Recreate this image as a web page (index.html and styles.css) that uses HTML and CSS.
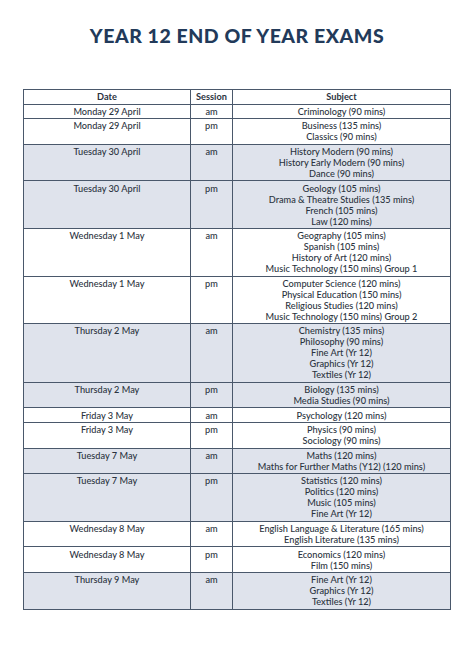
FILE: index.html
```html
<!DOCTYPE html>
<html lang="en">
<head>
<meta charset="utf-8">
<title>Year 12 End of Year Exams</title>
<link rel="stylesheet" href="styles.css">
</head>
<body>
<div class="page">
  <h1 class="title">YEAR 12 END OF YEAR EXAMS</h1>
  <table class="exams">
    <colgroup>
      <col class="c-date">
      <col class="c-session">
      <col class="c-subject">
    </colgroup>
    <thead>
      <tr><th>Date</th><th>Session</th><th>Subject</th></tr>
    </thead>
    <tbody>
      <tr><td>Monday 29 April</td><td>am</td><td>Criminology (90 mins)</td></tr>
      <tr><td>Monday 29 April</td><td>pm</td><td>Business (135 mins)<br>Classics (90 mins)</td></tr>
      <tr class="shade"><td>Tuesday 30 April</td><td>am</td><td>History Modern (90 mins)<br>History Early Modern (90 mins)<br>Dance (90 mins)</td></tr>
      <tr class="shade"><td>Tuesday 30 April</td><td>pm</td><td>Geology (105 mins)<br>Drama &amp; Theatre Studies (135 mins)<br>French (105 mins)<br>Law (120 mins)</td></tr>
      <tr><td>Wednesday 1 May</td><td>am</td><td>Geography (105 mins)<br>Spanish (105 mins)<br>History of Art (120 mins)<br>Music Technology (150 mins) Group 1</td></tr>
      <tr><td>Wednesday 1 May</td><td>pm</td><td>Computer Science (120 mins)<br>Physical Education (150 mins)<br>Religious Studies (120 mins)<br>Music Technology (150 mins) Group 2</td></tr>
      <tr class="shade"><td>Thursday 2 May</td><td>am</td><td>Chemistry (135 mins)<br>Philosophy (90 mins)<br>Fine Art (Yr 12)<br>Graphics (Yr 12)<br>Textiles (Yr 12)</td></tr>
      <tr class="shade"><td>Thursday 2 May</td><td>pm</td><td>Biology (135 mins)<br>Media Studies (90 mins)</td></tr>
      <tr><td>Friday 3 May</td><td>am</td><td>Psychology (120 mins)</td></tr>
      <tr><td>Friday 3 May</td><td>pm</td><td>Physics (90 mins)<br>Sociology (90 mins)</td></tr>
      <tr class="shade"><td>Tuesday 7 May</td><td>am</td><td>Maths (120 mins)<br>Maths for Further Maths (Y12) (120 mins)</td></tr>
      <tr class="shade"><td>Tuesday 7 May</td><td>pm</td><td>Statistics (120 mins)<br>Politics (120 mins)<br>Music (105 mins)<br>Fine Art (Yr 12)</td></tr>
      <tr><td>Wednesday 8 May</td><td>am</td><td>English Language &amp; Literature (165 mins)<br>English Literature (135 mins)</td></tr>
      <tr><td>Wednesday 8 May</td><td>pm</td><td>Economics (120 mins)<br>Film (150 mins)</td></tr>
      <tr class="shade"><td>Thursday 9 May</td><td>am</td><td>Fine Art (Yr 12)<br>Graphics (Yr 12)<br>Textiles (Yr 12)</td></tr>
    </tbody>
  </table>
</div>
</body>
</html>
```

FILE: styles.css
```css
html, body {
  margin: 0;
  padding: 0;
  background: #ffffff;
}

.page {
  width: 474px;
  padding: 26px 23px 0;
  box-sizing: border-box;
  font-family: Lato, "Liberation Sans", sans-serif;
  color: #2b3340;
}

.title {
  margin: 0 0 43px;
  text-align: center;
  font-family: Lato, "Liberation Sans", sans-serif;
  font-weight: 900;
  font-size: 19.5px;
  line-height: 20px;
  letter-spacing: 0.55px;
  color: #223a5a;
}

.exams {
  width: 100%;
  border-collapse: collapse;
  table-layout: fixed;
  border: 1.5px solid #4a586b;
  font-size: 9.2px;
  line-height: 11px;
}

.c-date { width: 167px; }
.c-session { width: 42px; }
.c-subject { width: auto; }

.exams th,
.exams td {
  border: 1px solid #4a586b;
  padding: 1.3px 2px 1.3px;
  text-align: center;
  vertical-align: top;
  white-space: nowrap;
  font-weight: 500;
}

.exams th {
  font-weight: 700;
  color: #2b3340;
}

.shade td {
  background: #dfe3ec;
}
```
